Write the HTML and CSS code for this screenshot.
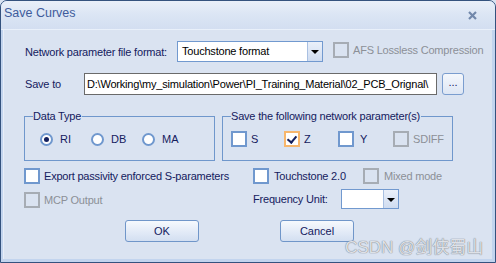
FILE: index.html
```html
<!DOCTYPE html>
<html lang="en">
<head>
    <meta charset="UTF-8">
    <meta name="viewport" content="width=device-width, initial-scale=1.0">
    <title>Save Curves</title>
    <link rel="stylesheet" href="styles.css">
</head>
<body>
    <div class="window">
        <div class="titlebar">
            <span class="title">Save Curves</span>
            <svg class="close" width="9" height="9" viewBox="0 0 9 9">
                <path d="M1 1 L8 8 M8 1 L1 8" stroke="#7288ab" stroke-width="2.2"/>
            </svg>
        </div>

        <div class="client">
            <div class="row row-format">
                <label class="lbl lbl-format">Network parameter file format:</label>
                <div class="combo combo-format">
                    <span class="combo-text">Touchstone format</span>
                    <span class="combo-btn"><span class="arrow"></span></span>
                </div>
                <div class="check check-afs disabled">
                    <span class="box"></span>
                    <span>AFS Lossless Compression</span>
                </div>
            </div>

            <div class="row row-save">
                <label class="lbl lbl-save">Save to</label>
                <div class="path">D:\Working\my_simulation\Power\PI_Training_Material\02_PCB_Orignal\</div>
                <button type="button" class="btn-browse">...</button>
            </div>

            <div class="groups">
                <fieldset class="group group-type">
                    <legend>Data Type</legend>
                    <div class="group-row">
                        <div class="radio checked"><span class="dot"></span><span>RI</span></div>
                        <div class="radio"><span class="dot"></span><span>DB</span></div>
                        <div class="radio"><span class="dot"></span><span>MA</span></div>
                    </div>
                </fieldset>
                <fieldset class="group group-params">
                    <legend>Save the following network parameter(s)</legend>
                    <div class="group-row">
                        <div class="check w53"><span class="box"></span><span>S</span></div>
                        <div class="check w54"><span class="box hot"><span class="tick"></span></span><span>Z</span></div>
                        <div class="check w55"><span class="box"></span><span class="lbl-y">Y</span></div>
                        <div class="check disabled"><span class="box"></span><span>SDIFF</span></div>
                    </div>
                </fieldset>
            </div>

            <div class="options">
                <div class="check"><span class="box"></span><span>Export passivity enforced S-parameters</span></div>
                <div class="opt-right">
                    <div class="check w110"><span class="box"></span><span>Touchstone 2.0</span></div>
                    <div class="check disabled"><span class="box"></span><span>Mixed mode</span></div>
                </div>
                <div class="check disabled"><span class="box"></span><span>MCP Output</span></div>
                <div class="opt-right">
                    <label class="lbl lbl-freq">Frequency Unit:</label>
                    <div class="combo combo-freq">
                        <span class="combo-text"></span>
                        <span class="combo-btn"><span class="arrow"></span></span>
                    </div>
                </div>
            </div>

            <div class="buttons">
                <button type="button" class="btn btn-ok">OK</button>
                <button type="button" class="btn btn-cancel">Cancel</button>
            </div>
        </div>

        <div class="watermark">CSDN @剑侠蜀山</div>
    </div>
</body>
</html>
```

FILE: styles.css
```css
body {
    margin: 0;
    font-family: "Liberation Sans", Arial, sans-serif;
    font-size: 11px;
    color: #14205e;
    background-color: #dae3f1;
}
.window {
    position: relative;
    width: 496px;
    height: 263px;
    box-sizing: border-box;
    border: 1px solid #34527e;
    border-radius: 7px 7px 0 0;
    overflow: hidden;
    display: flex;
    flex-direction: column;
    background-color: #c2d4ee;
}
.titlebar {
    height: 28px;
    flex: none;
    display: flex;
    justify-content: space-between;
    align-items: flex-start;
    padding: 0 0 0 3px;
    background: linear-gradient(#e9eff9, #dbe5f4 50%, #d3def1);
    border-bottom: 1px solid #e9f0fa;
}
.title {
    font-size: 12.5px;
    line-height: 14px;
    padding-top: 5px;
    color: #3e5c9c;
}
.close {
    margin: 10px 18px 0 0;
}
.client {
    flex: 1;
    margin: 0 3px 3px 2px;
    border-left: 1px solid #e8eef8;
    padding: 11px 0 0 20px;
    background-color: #dae3f1;
}
.row {
    display: flex;
    align-items: center;
}
.lbl {
    display: block;
    padding-left: 1px;
    letter-spacing: -0.2px;
}
.lbl-format {
    width: 152px;
}
.lbl-save {
    width: 59px;
}

/* combo boxes */
.combo {
    display: flex;
    box-sizing: border-box;
    border: 1px solid #7199cf;
    background-color: #fff;
}
.combo-format {
    width: 146px;
    height: 21px;
}
.combo-text {
    flex: 1;
    padding-left: 4px;
    line-height: 19px;
    color: #000;
    letter-spacing: -0.2px;
}
.combo-btn {
    width: 14px;
    display: flex;
    align-items: center;
    justify-content: center;
    border-left: 1px solid #a9c0e2;
    background: linear-gradient(#eaf0fa, #cfdcf0);
}
.arrow {
    width: 0;
    height: 0;
    border-left: 4px solid transparent;
    border-right: 4px solid transparent;
    border-top: 4px solid #000;
    margin-top: 1px;
}
.combo-freq {
    width: 58px;
    height: 20px;
}

/* checkboxes */
.check {
    display: flex;
    align-items: center;
    gap: 4px;
    letter-spacing: -0.2px;
}
.box {
    width: 16px;
    height: 16px;
    box-sizing: border-box;
    border: 2px solid #7098ce;
    background-color: #fff;
    flex: none;
    position: relative;
}
.box.hot {
    border-color: #f7b66c;
}
.tick {
    position: absolute;
    left: 3px;
    top: 1px;
    width: 4px;
    height: 7px;
    border-right: 2px solid #14205e;
    border-bottom: 2px solid #14205e;
    transform: rotate(40deg);
}
.check.disabled {
    color: #8c9097;
}
.check.disabled .box {
    border-color: #a6acb4;
    background-color: transparent;
}
.check-afs {
    align-self: flex-start;
    margin: 1px 0 0 10px;
}

/* save to */
.row-save {
    margin-top: 11px;
}
.path {
    width: 353px;
    height: 22px;
    box-sizing: border-box;
    border: 1px solid #6a6a6a;
    background-color: #fff;
    color: #000;
    padding-left: 2px;
    line-height: 20px;
    white-space: nowrap;
    overflow: hidden;
    letter-spacing: -0.2px;
}
.btn-browse {
    width: 22px;
    height: 22px;
    margin-left: 5px;
    padding: 0 0 4px;
    border: 1px solid #7a9dcf;
    border-radius: 3px;
    background: linear-gradient(#f4f7fc, #dde6f4);
    font-family: inherit;
    font-size: 11px;
    color: #14205e;
}

/* group boxes */
.groups {
    display: flex;
    gap: 7px;
    margin-top: 15px;
}
.group {
    margin: 0;
    padding: 8px 0 13px;
    border: 1px solid #6f97cc;
    height: 51px;
    box-sizing: border-box;
}
.group legend {
    padding: 0 1px 0 0;
    margin-left: 8px;
    line-height: 13px;
    letter-spacing: -0.2px;
}
.group-type {
    width: 191px;
}
.group-params {
    width: 231px;
}
.group-row {
    display: flex;
    align-items: center;
    height: 16px;
}
.group-type .group-row {
    padding-left: 15px;
}
.group-params .group-row {
    padding-left: 8px;
}
.radio {
    width: 51px;
    display: flex;
    align-items: center;
    gap: 7px;
}
.dot {
    width: 13px;
    height: 13px;
    box-sizing: border-box;
    border: 2px solid #7098ce;
    border-radius: 50%;
    background-color: #fff;
    display: flex;
    align-items: center;
    justify-content: center;
}
.radio.checked .dot::after {
    content: "";
    width: 5px;
    height: 5px;
    border-radius: 50%;
    background-color: #14205e;
}
.w53 { width: 53px; }
.w54 { width: 54px; }
.w55 { width: 55px; }
.w110 { width: 110px; }
.lbl-y {
    margin-left: 2px;
}

/* lower options */
.options {
    display: grid;
    grid-template-columns: 229px auto;
    grid-auto-rows: 16px 20px;
    row-gap: 5px;
    margin-top: 7px;
    align-items: center;
}
.options > .check:nth-child(3) {
    margin-top: 2px;
}
.opt-right {
    display: flex;
    align-items: center;
}
.opt-right .check {
    gap: 5px;
}
.lbl-freq {
    width: 88px;
    padding-left: 0;
}

/* buttons */
.buttons {
    display: flex;
    margin-top: 11px;
    padding-left: 101px;
    gap: 81px;
}
.btn {
    width: 74px;
    height: 22px;
    border: 1px solid #7096c9;
    border-radius: 3px;
    background: linear-gradient(#f6f9fd, #e6edf8 45%, #d3dff1);
    font-family: inherit;
    font-size: 11px;
    color: #14205e;
    padding: 0;
}

.watermark {
    position: absolute;
    left: 344px;
    top: 232px;
    font-family: "Liberation Sans", "Noto Sans CJK SC", sans-serif;
    font-size: 17px;
    color: rgba(240, 243, 248, 0.85);
    text-shadow: 0 0 1px #7d838c, 0 0 1px #7d838c;
    white-space: nowrap;
}
```
